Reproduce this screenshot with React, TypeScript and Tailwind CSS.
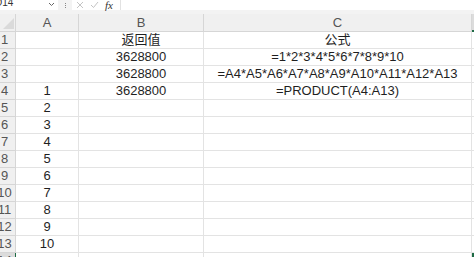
import React from 'react';

const rows: [string, string, string, string][] = [
  ['1', '', '返回值', '公式'],
  ['2', '', '3628800', '=1*2*3*4*5*6*7*8*9*10'],
  ['3', '', '3628800', '=A4*A5*A6*A7*A8*A9*A10*A11*A12*A13'],
  ['4', '1', '3628800', '=PRODUCT(A4:A13)'],
  ['5', '2', '', ''],
  ['6', '3', '', ''],
  ['7', '4', '', ''],
  ['8', '5', '', ''],
  ['9', '6', '', ''],
  ['10', '7', '', ''],
  ['11', '8', '', ''],
  ['12', '9', '', ''],
  ['13', '10', '', ''],
];

function RowHead({ label, active }: { label: string; active?: boolean }) {
  return (
    <div
      className={
        'w-[16px] shrink-0 overflow-hidden border-r border-b ' +
        (active ? 'bg-[#dcdcdc] border-r-[#1e6b45] border-b-[#d6d6d6]' : 'bg-[#f0f0f0] border-[#d6d6d6]')
      }
    >
      <div className="-ml-[7px] w-[23px] text-center text-[#555]">{label}</div>
    </div>
  );
}

export default function App() {
  return (
    <div className="w-[474px] h-[257px] overflow-hidden bg-white font-['Liberation_Sans','Noto_Sans_CJK_SC',sans-serif] text-[13px] leading-[16px] text-[#1f1f1f]">
      {/* formula bar */}
      <div className="flex h-[14px] bg-[#f3f3f3] pb-[4px]">
        <div className="relative flex h-[10px] w-[58px] items-end overflow-hidden bg-white">
          <span className="-ml-[5px] text-[10px] leading-[10px] text-[#333] -translate-y-[2px]">D14</span>
          <svg className="absolute right-[3px] top-[2px]" width="7" height="5" viewBox="0 0 7 5">
            <path d="M1 1l2.5 2.5L6 1" stroke="#666" strokeWidth="1" fill="none" />
          </svg>
        </div>
        <div className="flex w-[14px] flex-col items-center justify-center gap-[1px]">
          <span className="h-[1px] w-[1px] bg-[#888]" />
          <span className="h-[1px] w-[1px] bg-[#888]" />
          <span className="h-[1px] w-[1px] bg-[#888]" />
        </div>
        <div className="flex h-[10px] w-[48px] items-center gap-[6px] bg-white pl-[4px]">
          <svg width="8" height="8" viewBox="0 0 8 8">
            <path d="M1 1l6 6M7 1L1 7" stroke="#c4c4c4" strokeWidth="1" />
          </svg>
          <svg width="9" height="8" viewBox="0 0 9 8">
            <path d="M1 4l2.5 2.5L8 1" stroke="#c4c4c4" strokeWidth="1" fill="none" />
          </svg>
          <span className="font-['Liberation_Serif',serif] text-[11px] italic leading-[10px] text-[#333]">fx</span>
        </div>
        <div className="h-[10px] flex-1 border-l border-[#e2e2e2] bg-white" />
      </div>

      {/* column headers */}
      <div className="flex h-[18px] text-[#555]">
        <div className="flex w-[16px] shrink-0 items-end justify-end border-r border-b border-[#d6d6d6] bg-[#f0f0f0] pb-[2px] pr-[1px]">
          <svg width="11" height="11" viewBox="0 0 11 11">
            <polygon points="11,0 11,11 0,11" fill="#dadada" />
          </svg>
        </div>
        <div className="flex w-[63px] shrink-0 items-center justify-center border-r border-b border-[#d6d6d6] bg-[#f0f0f0]">A</div>
        <div className="flex w-[125px] shrink-0 items-center justify-center border-r border-b border-[#d6d6d6] bg-[#f0f0f0]">B</div>
        <div className="flex w-[268px] shrink-0 items-center justify-center border-r border-b border-[#d6d6d6] bg-[#f0f0f0]">C</div>
        <div className="flex-1 border-b-2 border-[#1e6b45] bg-[#dcdcdc]" />
      </div>

      {/* body */}
      {rows.map(([n, a, b, c]) => (
        <div key={n} className="flex h-[17px]">
          <RowHead label={n} />
          <div className="flex w-[63px] shrink-0 items-center justify-center border-r border-b border-[#e3e3e3]">{a}</div>
          <div className="flex w-[125px] shrink-0 items-center justify-center border-r border-b border-[#e3e3e3]">{b}</div>
          <div className="flex w-[268px] shrink-0 items-center justify-center whitespace-nowrap border-r border-b border-[#e3e3e3]">{c}</div>
          <div className="flex-1 border-b border-[#e3e3e3]" />
        </div>
      ))}
      <div className="flex h-[17px]">
        <RowHead label="14" active />
        <div className="w-[63px] shrink-0 border-r border-[#e3e3e3]" />
        <div className="w-[125px] shrink-0 border-r border-[#e3e3e3]" />
        <div className="w-[268px] shrink-0 border-r border-[#e3e3e3]" />
        <div className="flex-1 border-t-2 border-l-2 border-[#1e6b45]" />
      </div>
    </div>
  );
}
